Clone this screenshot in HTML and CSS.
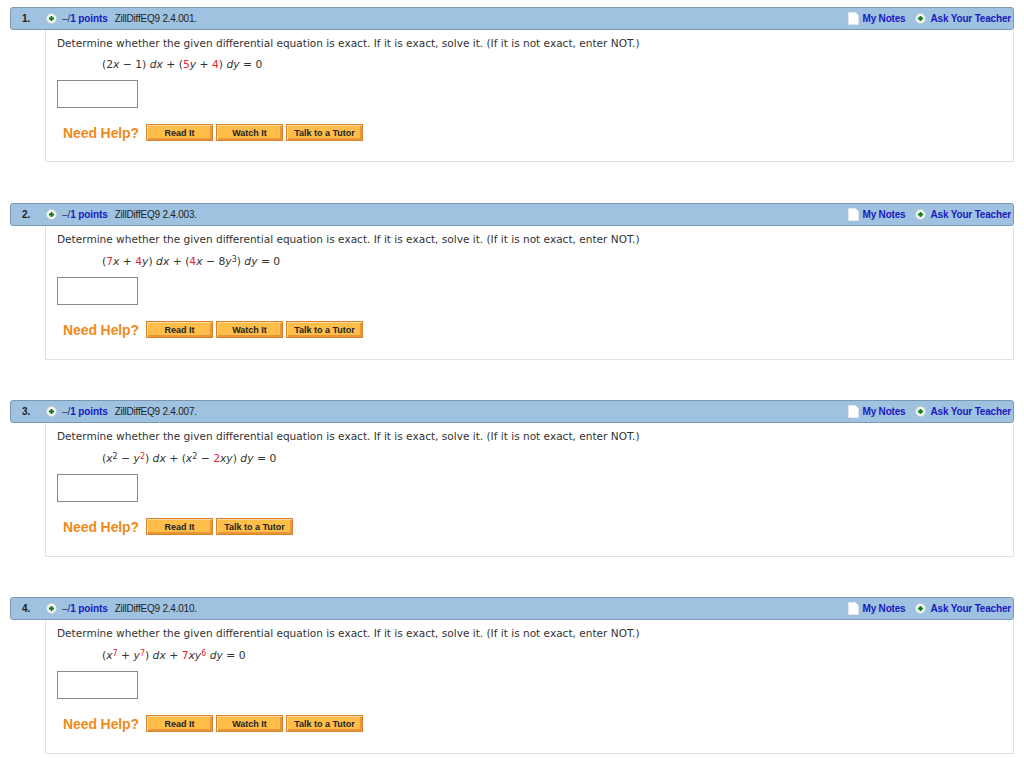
FILE: index.html
```html
<!DOCTYPE html>
<html lang="en">
<head>
<meta charset="UTF-8" />
<title>Assignment</title>
<link rel="stylesheet" href="styles.css">
</head>
<body>

<div class="question q1">
  <div class="head">
    <span class="num">1.</span>
    <svg class="plus" width="11" height="11" viewBox="0 0 12 12"><circle cx="6" cy="6" r="5.5" fill="#f4f6f4" stroke="#c4ccd0"/><path d="M6 3.2v5.6M3.2 6h5.6" stroke="#0a7a1a" stroke-width="2"/></svg>
    <span class="pts"><span class="dash">–/</span>1 points</span>
    <span class="code">ZillDiffEQ9 2.4.001.</span>
    <span class="tools">
      <svg class="note" width="11" height="13" viewBox="0 0 11 13"><path d="M.5.5h7l3 3v9H.5z" fill="#fff" stroke="#dfe5ea"/></svg>
      <a class="link">My Notes</a>
      <svg class="plus plus-r" width="11" height="11" viewBox="0 0 12 12"><circle cx="6" cy="6" r="5.5" fill="#f4f6f4" stroke="#c4ccd0"/><path d="M6 3.2v5.6M3.2 6h5.6" stroke="#0a7a1a" stroke-width="2"/></svg>
      <a class="link">Ask Your Teacher</a>
    </span>
  </div>
  <div class="card">
    <p class="text">Determine whether the given differential equation is exact. If it is exact, solve it. (If it is not exact, enter NOT.)</p>
    <p class="eq">(2<i>x</i> − 1) <i>dx</i> + (<b>5</b><i>y</i> + <b>4</b>) <i>dy</i> = 0</p>
    <input class="answer" type="text" />
    <div class="help">
      <span class="need">Need Help?</span>
      <button class="btn btn-read">Read It</button>
      <button class="btn btn-watch">Watch It</button>
      <button class="btn btn-talk">Talk to a Tutor</button>
    </div>
  </div>
</div>

<div class="question q2">
  <div class="head">
    <span class="num">2.</span>
    <svg class="plus" width="11" height="11" viewBox="0 0 12 12"><circle cx="6" cy="6" r="5.5" fill="#f4f6f4" stroke="#c4ccd0"/><path d="M6 3.2v5.6M3.2 6h5.6" stroke="#0a7a1a" stroke-width="2"/></svg>
    <span class="pts"><span class="dash">–/</span>1 points</span>
    <span class="code">ZillDiffEQ9 2.4.003.</span>
    <span class="tools">
      <svg class="note" width="11" height="13" viewBox="0 0 11 13"><path d="M.5.5h7l3 3v9H.5z" fill="#fff" stroke="#dfe5ea"/></svg>
      <a class="link">My Notes</a>
      <svg class="plus plus-r" width="11" height="11" viewBox="0 0 12 12"><circle cx="6" cy="6" r="5.5" fill="#f4f6f4" stroke="#c4ccd0"/><path d="M6 3.2v5.6M3.2 6h5.6" stroke="#0a7a1a" stroke-width="2"/></svg>
      <a class="link">Ask Your Teacher</a>
    </span>
  </div>
  <div class="card">
    <p class="text">Determine whether the given differential equation is exact. If it is exact, solve it. (If it is not exact, enter NOT.)</p>
    <p class="eq">(<b>7</b><i>x</i> + <b>4</b><i>y</i>) <i>dx</i> + (<b>4</b><i>x</i> − 8<i>y</i><sup>3</sup>) <i>dy</i> = 0</p>
    <input class="answer" type="text" />
    <div class="help">
      <span class="need">Need Help?</span>
      <button class="btn btn-read">Read It</button>
      <button class="btn btn-watch">Watch It</button>
      <button class="btn btn-talk">Talk to a Tutor</button>
    </div>
  </div>
</div>

<div class="question q3">
  <div class="head">
    <span class="num">3.</span>
    <svg class="plus" width="11" height="11" viewBox="0 0 12 12"><circle cx="6" cy="6" r="5.5" fill="#f4f6f4" stroke="#c4ccd0"/><path d="M6 3.2v5.6M3.2 6h5.6" stroke="#0a7a1a" stroke-width="2"/></svg>
    <span class="pts"><span class="dash">–/</span>1 points</span>
    <span class="code">ZillDiffEQ9 2.4.007.</span>
    <span class="tools">
      <svg class="note" width="11" height="13" viewBox="0 0 11 13"><path d="M.5.5h7l3 3v9H.5z" fill="#fff" stroke="#dfe5ea"/></svg>
      <a class="link">My Notes</a>
      <svg class="plus plus-r" width="11" height="11" viewBox="0 0 12 12"><circle cx="6" cy="6" r="5.5" fill="#f4f6f4" stroke="#c4ccd0"/><path d="M6 3.2v5.6M3.2 6h5.6" stroke="#0a7a1a" stroke-width="2"/></svg>
      <a class="link">Ask Your Teacher</a>
    </span>
  </div>
  <div class="card">
    <p class="text">Determine whether the given differential equation is exact. If it is exact, solve it. (If it is not exact, enter NOT.)</p>
    <p class="eq">(<i>x</i><sup>2</sup> − <i>y</i><sup class="red">2</sup>) <i>dx</i> + (<i>x</i><sup>2</sup> − <b>2</b><i>xy</i>) <i>dy</i> = 0</p>
    <input class="answer" type="text" />
    <div class="help">
      <span class="need">Need Help?</span>
      <button class="btn btn-read">Read It</button>
      <button class="btn btn-talk">Talk to a Tutor</button>
    </div>
  </div>
</div>

<div class="question q4">
  <div class="head">
    <span class="num">4.</span>
    <svg class="plus" width="11" height="11" viewBox="0 0 12 12"><circle cx="6" cy="6" r="5.5" fill="#f4f6f4" stroke="#c4ccd0"/><path d="M6 3.2v5.6M3.2 6h5.6" stroke="#0a7a1a" stroke-width="2"/></svg>
    <span class="pts"><span class="dash">–/</span>1 points</span>
    <span class="code">ZillDiffEQ9 2.4.010.</span>
    <span class="tools">
      <svg class="note" width="11" height="13" viewBox="0 0 11 13"><path d="M.5.5h7l3 3v9H.5z" fill="#fff" stroke="#dfe5ea"/></svg>
      <a class="link">My Notes</a>
      <svg class="plus plus-r" width="11" height="11" viewBox="0 0 12 12"><circle cx="6" cy="6" r="5.5" fill="#f4f6f4" stroke="#c4ccd0"/><path d="M6 3.2v5.6M3.2 6h5.6" stroke="#0a7a1a" stroke-width="2"/></svg>
      <a class="link">Ask Your Teacher</a>
    </span>
  </div>
  <div class="card">
    <p class="text">Determine whether the given differential equation is exact. If it is exact, solve it. (If it is not exact, enter NOT.)</p>
    <p class="eq">(<i>x</i><sup class="red">7</sup> + <i>y</i><sup class="red">7</sup>) <i>dx</i> + <b>7</b><i>xy</i><sup class="red">6</sup> <i>dy</i> = 0</p>
    <input class="answer" type="text" />
    <div class="help">
      <span class="need">Need Help?</span>
      <button class="btn btn-read">Read It</button>
      <button class="btn btn-watch">Watch It</button>
      <button class="btn btn-talk">Talk to a Tutor</button>
    </div>
  </div>
</div>

</body>
</html>
```

FILE: styles.css
```css
body {
  margin: 0;
  padding: 7px 10px 0 10px;
  background: #fff;
  font-family: "DejaVu Sans", Verdana, sans-serif;
  color: #333;
}
.q1 {
  margin-bottom: 41px;
}
.q2, .q3 {
  margin-bottom: 40px;
}
.head {
  display: flex;
  align-items: center;
  height: 23px;
  box-sizing: border-box;
  background: #9fc2e0;
  border: 1px solid #7c99b3;
  border-radius: 3px;
  font-family: "Liberation Sans", Arial, sans-serif;
  font-size: 10px;
}
.num {
  width: 35px;
  padding-left: 11px;
  box-sizing: border-box;
  font-weight: bold;
  color: #222;
}
.plus {
  flex: none;
}
.pts {
  margin-left: 5px;
  font-size: 10px;
  letter-spacing: -0.1px;
  font-weight: bold;
  color: #1a1ac0;
}
.dash {
  font-weight: normal;
  color: #26327a;
}
.code {
  margin-left: 7px;
  font-size: 10px;
  letter-spacing: -0.22px;
  color: #222;
}
.tools {
  margin-left: auto;
  display: flex;
  align-items: center;
  padding-right: 2px;
}
.link {
  font-size: 10px;
  letter-spacing: -0.18px;
  font-weight: bold;
  color: #1a1ac0;
}
.note {
  margin-right: 3px;
}
.plus-r {
  margin: 0 5px 0 9px;
}
.card {
  margin-left: 35px;
  height: 134px;
  box-sizing: border-box;
  border: 1px solid #e2e2e2;
  border-top: none;
  padding: 6px 11px 0 11px;
}
.q1 .card {
  height: 132px;
}
.text {
  margin: 0;
  font-size: 10.55px;
  line-height: 14px;
  white-space: nowrap;
}
.eq {
  margin: 9px 0 0 45px;
  font-size: 10.75px;
  line-height: 14px;
  white-space: nowrap;
}
.q1 .eq {
  margin-top: 8px;
}
.eq b {
  font-weight: normal;
  color: #ee2233;
}
.eq sup {
  font-size: 8px;
  line-height: 0;
  vertical-align: 3px;
}
.eq .red {
  color: #ee2233;
}
.answer {
  display: block;
  margin-top: 8px;
  width: 81px;
  height: 28px;
  box-sizing: border-box;
  border: 1px solid #8a8a8a;
  background: #fff;
  padding: 0;
}
.help {
  display: flex;
  align-items: center;
  margin-top: 16px;
  padding-left: 6px;
}
.need {
  font-family: "Liberation Sans", Arial, sans-serif;
  font-size: 14px;
  letter-spacing: -0.1px;
  font-weight: bold;
  color: #f08a1d;
  margin-right: 7px;
}
.btn {
  height: 17px;
  margin: 0 3px 0 0;
  padding: 0;
  box-sizing: border-box;
  background: #ffbe4a;
  border: 1px solid #d9822b;
  box-shadow: inset 1px 1px 0 #f8d9a0, inset -2px -2px 0 #e8963a;
  border-radius: 0;
  font-family: "Liberation Sans", Arial, sans-serif;
  font-size: 9px;
  font-weight: bold;
  color: #222;
}
.btn-read {
  width: 67px;
}
.btn-watch {
  width: 67px;
}
.btn-talk {
  width: 77px;
}
```
